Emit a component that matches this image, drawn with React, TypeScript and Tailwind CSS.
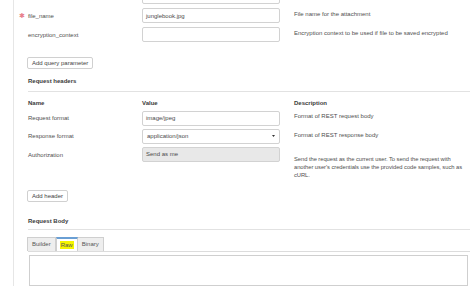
import React from 'react';

function Field({ value, gray }: { value?: string; gray?: boolean }) {
  return (
    <div
      className={`w-[138px] h-[15px] shrink-0 border border-[#d2d2d2] rounded-[2px] px-[3px] flex items-center text-[#4a4a4a] ${
        gray ? 'bg-[#e8e8e8]' : 'bg-white'
      }`}
    >
      {value}
    </div>
  );
}

function SelectField({ value }: { value: string }) {
  return (
    <div className="w-[138px] h-[15px] shrink-0 border border-[#d2d2d2] rounded-[2px] pl-[4px] pr-[4px] flex items-center justify-between text-[#4a4a4a] bg-white">
      <span>{value}</span>
      <svg width="3" height="2" viewBox="0 0 3 2">
        <path d="M0 0 L3 0 L1.5 2 Z" fill="#333" />
      </svg>
    </div>
  );
}

function Btn({ label, className }: { label: string; className?: string }) {
  return (
    <div
      className={`h-[15px] -ml-[1px] w-fit px-[4px] border border-[#d0d0d0] rounded-[2px] bg-white flex items-center text-[#444] ${className ?? ''}`}
    >
      {label}
    </div>
  );
}

export default function App() {
  const params = [
    { name: '', value: '', desc: '' },
    { name: 'file_name', value: 'junglebook.jpg', desc: 'File name for the attachment', required: true },
    { name: 'encryption_context', value: '', desc: 'Encryption context to be used if file to be saved encrypted' },
  ];

  const headers = [
    { name: 'Request format', desc: 'Format of REST request body' },
    { name: 'Response format', desc: 'Format of REST response body' },
  ];

  return (
    <div className="w-[474px] h-[286px] overflow-hidden bg-white font-['Liberation_Sans',Arial,sans-serif] text-[6px] leading-[8px] text-[#4f4f4f]">
      <div className="ml-[13px] h-full border-l border-[#e6e6e6] pl-[14px] pr-[4px] flex flex-col">
        {/* query parameters */}
        <div className="-mt-[11px] flex flex-col gap-[4px]">
          {params.map((p, i) => (
            <div key={i} className="flex items-center h-[15px]">
              <div className="w-[114px] shrink-0 flex items-center">
                {p.required && (
                  <span className="-ml-[9px] mr-[3px] text-[7px] text-[#e8808c] font-['DejaVu_Sans',sans-serif]">✱</span>
                )}
                {p.name}
              </div>
              <Field value={p.value} />
              <div className="ml-[14px] -mt-[3px]">{p.desc}</div>
            </div>
          ))}
        </div>

        <Btn label="Add query parameter" className="mt-[15px]" />

        <div className="mt-[8px] font-bold text-[#3a3a3a]">Request headers</div>
        <div className="mt-[6px] border-t border-[#e2e2e2]" />

        <div className="mt-[7px] flex font-bold text-[#3a3a3a]">
          <div className="w-[114px] shrink-0">Name</div>
          <div className="w-[138px] shrink-0">Value</div>
          <div className="ml-[14px]">Description</div>
        </div>

        <div className="mt-[4px] flex flex-col gap-[3px]">
          <div className="flex items-start">
            <div className="w-[114px] shrink-0 h-[15px] flex items-center">{headers[0].name}</div>
            <Field value="image/jpeg" />
            <div className="ml-[14px] mt-[1px]">{headers[0].desc}</div>
          </div>
          <div className="flex items-start">
            <div className="w-[114px] shrink-0 h-[15px] flex items-center">{headers[1].name}</div>
            <SelectField value="application/json" />
            <div className="ml-[14px] mt-[2px]">{headers[1].desc}</div>
          </div>
          <div className="flex items-start">
            <div className="w-[114px] shrink-0 h-[16px] flex items-center">Authorization</div>
            <Field value="Send as me" gray />
            <div className="ml-[14px] mt-[8px] whitespace-nowrap text-[5.8px] tracking-[-0.05px]">
              Send the request as the current user. To send the request with
              <br />
              another user's credentials use the provided code samples, such as
              <br />
              cURL.
            </div>
          </div>
        </div>

        <Btn label="Add header" className="mt-[11px]" />

        <div className="mt-[15px] font-bold text-[#3a3a3a]">Request Body</div>
        <div className="mt-[4px] border-t border-[#e2e2e2]" />

        {/* tabs */}
        <div className="mt-[7px] flex border-b border-[#dcdcdc]">
          <div className="-ml-[1px] h-[14px] px-[4px] border border-b-0 border-[#cfcfcf] bg-[#eeeeee] flex items-center text-[#555]">
            Builder
          </div>
          <div className="h-[14px] px-[3px] border-x border-[#cfcfcf] border-t-2 border-t-[#6a9fd4] bg-white flex items-center">
            <span className="bg-[#f5f500] px-[1px] text-[#555]">Raw</span>
          </div>
          <div className="h-[14px] px-[4px] border border-b-0 border-l-0 border-[#cfcfcf] bg-[#eeeeee] flex items-center text-[#555]">
            Binary
          </div>
        </div>

        <div className="mt-[3px] ml-[1px] mr-[2px] h-[40px] border border-[#cfcfcf] bg-white" />
      </div>
    </div>
  );
}
